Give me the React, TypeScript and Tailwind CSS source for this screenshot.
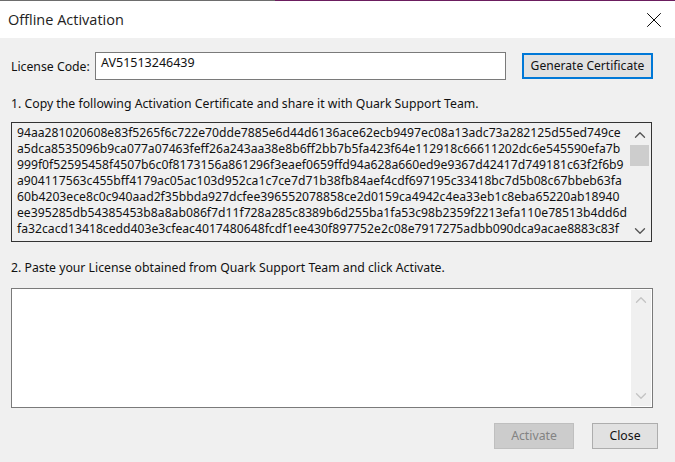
import React from 'react';
import { X, ChevronUp, ChevronDown } from 'lucide-react';

const certificate = [
  '94aa281020608e83f5265f6c722e70dde7885e6d44d6136ace62ecb9497ec08a13adc73a282125d55ed749ce',
  'a5dca8535096b9ca077a07463feff26a243aa38e8b6ff2bb7b5fa423f64e112918c66611202dc6e545590efa7b',
  '999f0f52595458f4507b6c0f8173156a861296f3eaef0659ffd94a628a660ed9e9367d42417d749181c63f2f6b9',
  'a904117563c455bff4179ac05ac103d952ca1c7ce7d71b38fb84aef4cdf697195c33418bc7d5b08c67bbeb63fa',
  '60b4203ece8c0c940aad2f35bbda927dcfee396552078858ce2d0159ca4942c4ea33eb1c8eba65220ab18940',
  'ee395285db54385453b8a8ab086f7d11f728a285c8389b6d255ba1fa53c98b2359f2213efa110e78513b4dd6d',
  'fa32cacd13418cedd403e3cfeac4017480648fcdf1ee430f897752e2c08e7917275adbb090dca9acae8883c83f',
];

export default function App() {
  return (
    <div className="w-[675px] h-[462px] overflow-hidden flex flex-col bg-[#f0f0f0] text-[#111] font-['Noto_Sans',sans-serif] text-[12.25px]">
      <div className="h-px flex shrink-0">
        <div className="w-[275px] bg-[#6d6d6d]" />
        <div className="flex-1 bg-[#6b1d5e]" />
      </div>

      <div className="h-[37px] shrink-0 bg-white flex items-center justify-between pl-2 pr-[8px]">
        <span className="text-[14.5px] font-['Open_Sans',sans-serif] text-[#222]">Offline Activation</span>
        <X className="w-[26px] h-[26px] text-black" strokeWidth={0.9} />
      </div>

      <div className="flex-1 flex flex-col pl-[11px] pr-[17px]">
        <div className="flex items-center mt-[14px] h-[28px] pr-[5px]">
          <span className="w-[84px] shrink-0 pt-[2px]">License Code:</span>
          <div className="w-[411px] h-[28px] bg-white border border-[#7a7a7a] px-[5px] leading-[20px] text-[12.5px]">AV51513246439</div>
          <button className="ml-4 w-[131px] h-[26px] bg-[#e1e1e1] border-2 border-[#0078d7] text-[12.1px] leading-none">Generate Certificate</button>
        </div>

        <p className="mt-[14px] h-[20px] leading-[20px]">1. Copy the following Activation Certificate and share it with Quark Support Team.</p>

        <div className="mt-[8px] w-[641px] h-[120px] border border-[#333] flex">
          <div className="flex-1 pl-[5px] pt-[2px] overflow-hidden text-[12.2px] leading-[16px] whitespace-nowrap">
            {certificate.map((line) => (
              <div key={line}>{line}</div>
            ))}
          </div>
          <div className="w-[19px] mr-[2px] bg-[#f0f0f0] flex flex-col items-center justify-between py-[1px]">
            <div className="w-full flex flex-col">
              <div className="h-[21px] flex items-center justify-center">
                <ChevronUp className="w-[18px] h-[18px] text-[#555]" strokeWidth={1.8} />
              </div>
              <div className="w-full h-[21px] bg-[#cdcdcd]" />
            </div>
            <ChevronDown className="w-[18px] h-[18px] text-[#555]" strokeWidth={1.8} />
          </div>
        </div>

        <p className="mt-[16px] h-[20px] leading-[20px]">2. Paste your License obtained from Quark Support Team and click Activate.</p>

        <div className="mt-[10px] w-[642px] h-[120px] bg-white border border-[#7a7a7a] flex justify-end pr-[1px] py-[1px]">
          <div className="w-[20px] bg-[#f0f0f0] flex flex-col items-center justify-between py-[1px]">
            <ChevronUp className="w-[18px] h-[18px] text-[#c4c4c4]" strokeWidth={1.8} />
            <ChevronDown className="w-[18px] h-[18px] text-[#c4c4c4]" strokeWidth={1.8} />
          </div>
        </div>

        <div className="mt-[15px] flex justify-end">
          <button className="w-[80px] h-[26px] bg-[#cccccc] border border-[#bfbfbf] text-[#838383]">Activate</button>
          <button className="ml-[18px] w-[66px] h-[26px] bg-[#e1e1e1] border border-[#adadad]">Close</button>
        </div>
      </div>
    </div>
  );
}
